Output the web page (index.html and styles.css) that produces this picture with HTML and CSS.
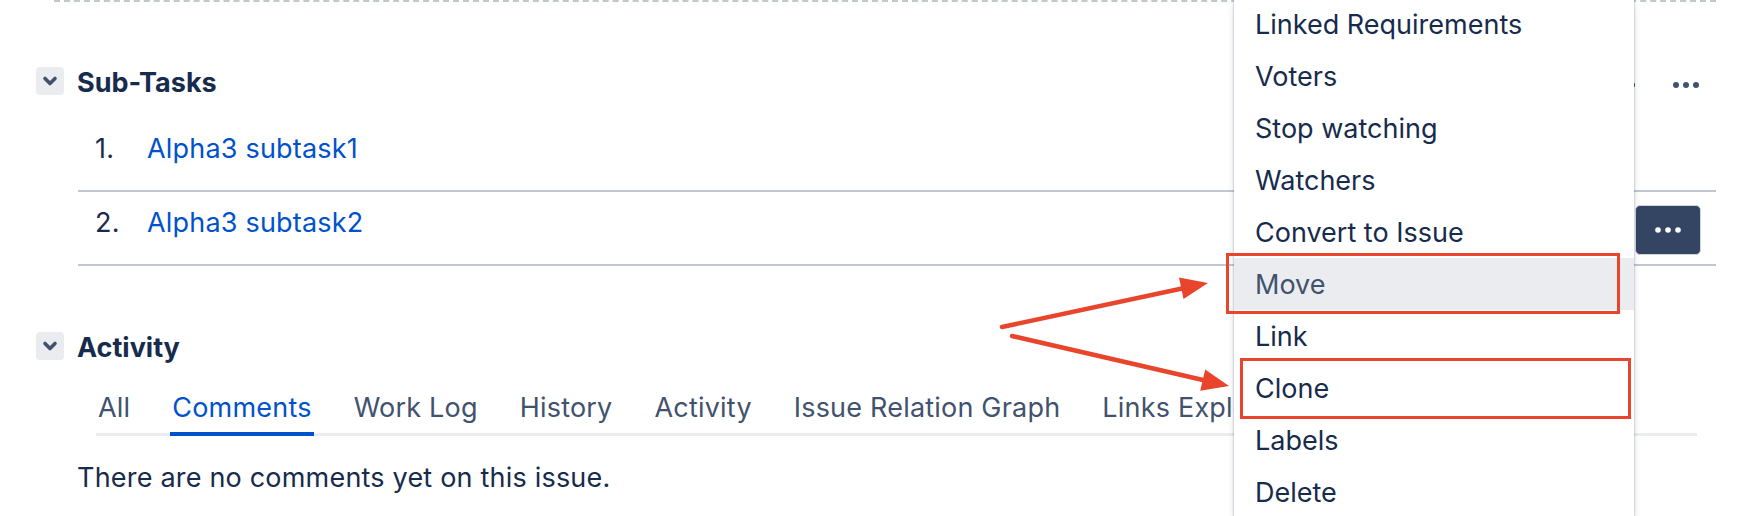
FILE: index.html
```html
<!DOCTYPE html>
<html lang="en">
<head>
  <meta charset="UTF-8">
  <title>Sub-Tasks - More actions</title>
  <link rel="stylesheet" href="styles.css">
</head>
<body>
  <div class="issue">
    <div class="dash"></div>

    <section class="module">
      <header class="modHeader">
        <span class="toggle">
          <svg width="28" height="28" viewBox="0 0 28 28"><path d="M9 11.5 L14 16.5 L19 11.5" fill="none" stroke="#42526e" stroke-width="3.6" stroke-linecap="round" stroke-linejoin="round"/></svg>
        </span>
        <h2>Sub-Tasks</h2>
        <div class="modActions">
          <svg class="plus" width="18" height="18" viewBox="0 0 18 18"><path d="M9 2 V16 M2 9 H16" stroke="#42526e" stroke-width="3.5"/></svg>
          <svg width="26" height="8" viewBox="0 0 26 8"><circle cx="3" cy="4" r="3" fill="#42526e"/><circle cx="13" cy="4" r="3" fill="#42526e"/><circle cx="23" cy="4" r="3" fill="#42526e"/></svg>
        </div>
      </header>

      <ol class="subtasks">
        <li class="row">
          <span class="num">1.</span>
          <a href="#">Alpha3 subtask1</a>
        </li>
        <li class="row">
          <span class="num">2.</span>
          <a href="#">Alpha3 subtask2</a>
          <span class="moreBtn">
            <svg width="26" height="8" viewBox="0 0 26 8"><circle cx="3" cy="4" r="2.8" fill="#fff"/><circle cx="13" cy="4" r="2.8" fill="#fff"/><circle cx="23" cy="4" r="2.8" fill="#fff"/></svg>
          </span>
        </li>
      </ol>
    </section>

    <section class="module activity">
      <header class="modHeader">
        <span class="toggle">
          <svg width="28" height="28" viewBox="0 0 28 28"><path d="M9 11.5 L14 16.5 L19 11.5" fill="none" stroke="#42526e" stroke-width="3.6" stroke-linecap="round" stroke-linejoin="round"/></svg>
        </span>
        <h2>Activity</h2>
      </header>

      <div class="tabBar">
        <ul class="tabs">
          <li>All</li>
          <li class="active">Comments</li>
          <li>Work Log</li>
          <li>History</li>
          <li>Activity</li>
          <li>Issue Relation Graph</li>
          <li>Links Explorer</li>
        </ul>
      </div>

      <p class="empty">There are no comments yet on this issue.</p>
    </section>
  </div>

  <!-- opened "more" menu of subtask 2 -->
  <ul class="dropdown">
    <li>Linked Requirements</li>
    <li>Voters</li>
    <li>Stop watching</li>
    <li>Watchers</li>
    <li>Convert to Issue</li>
    <li class="hover">Move</li>
    <li>Link</li>
    <li>Clone</li>
    <li>Labels</li>
    <li>Delete</li>
  </ul>

  <!-- annotations -->
  <div class="callout moveBox"></div>
  <div class="callout cloneBox"></div>
  <svg class="arrows" width="1756" height="516" viewBox="0 0 1756 516">
    <path d="M1002 327 L1182 288.5" stroke="#e8452c" stroke-width="4.5" stroke-linecap="round"/>
    <polygon points="1208,283 1183.5,299 1179,277.5" fill="#e8452c"/>
    <path d="M1012 336 L1203 380" stroke="#e8452c" stroke-width="4.5" stroke-linecap="round"/>
    <polygon points="1229,386 1200.2,390.8 1205.2,369.4" fill="#e8452c"/>
  </svg>
</body>
</html>
```

FILE: styles.css
```css
body {
  margin: 0;
  background: #fff;
  font-family: Inter, "Noto Sans", sans-serif;
  font-size: 27px;
  letter-spacing: 0.2px;
  color: #172b4d;
  overflow: hidden;
}
.issue {
  width: 1680px;
  margin-left: 36px;
}
.dash {
  margin-left: 18px;
  height: 0;
  border-top: dashed #c1c7d0 2px;
}
.modHeader {
  display: flex;
  align-items: center;
  height: 28px;
  margin-top: 65px;
}
.toggle {
  display: flex;
  width: 28px;
  height: 28px;
  border-radius: 4px;
  background: #ebecf0;
}
.modHeader h2 {
  margin: 0 0 0 13px;
  font-size: 27px;
  line-height: 28px;
  font-weight: 700;
  letter-spacing: 0;
  padding-top: 4px;
}
.modActions {
  margin-left: auto;
  margin-right: 17px;
  display: flex;
  align-items: center;
  gap: 36px;
  padding-top: 8px;
}
.subtasks {
  list-style: none;
  margin: 23px 0 0 42px;
  padding: 0;
}
.row {
  display: flex;
  align-items: center;
  height: 74px;
  padding: 0 15px 10px 17px;
  box-sizing: border-box;
  border-bottom: solid #c1c7d0 2px;
  line-height: 32px;
}
.num {
  width: 52px;
}
.row a {
  color: #0052cc;
  text-decoration: none;
}
.moreBtn {
  margin-left: auto;
  margin-top: 14px;
  display: flex;
  align-items: center;
  justify-content: center;
  width: 66px;
  height: 50px;
  box-sizing: border-box;
  border-radius: 5px;
  background: #344563;
  border: solid #d3d6dc 1.5px;
}
.activity .modHeader {
  margin-top: 66px;
}
.tabBar {
  margin: 32px 19px 0 60px;
  box-shadow: inset 0 -3px 0 #ebecf0;
}
.tabs {
  list-style: none;
  display: flex;
  gap: 38px;
  max-width: 1138px;
  margin: 0;
  padding: 0;
  overflow: hidden;
  white-space: nowrap;
}
.tabs li {
  color: #42526e;
  line-height: 32px;
  padding: 0 2px 12px;
}
.tabs li.active {
  color: #0052cc;
  box-shadow: inset 0 -4px 0 #0052cc;
}
.empty {
  margin: 26px 0 0 41px;
  line-height: 32px;
}
.dropdown {
  position: absolute;
  left: 1234px;
  top: -2px;
  width: 400px;
  margin: 0;
  padding: 0;
  list-style: none;
  background: #fff;
  letter-spacing: 0;
  box-shadow: 0 4px 8px -2px rgba(9, 30, 66, 0.25), 0 0 2px rgba(9, 30, 66, 0.31);
}
.dropdown li {
  height: 52px;
  box-sizing: border-box;
  padding: 11px 0 0 21px;
  line-height: 32px;
}
.dropdown li.hover {
  background: #ebecf0;
  color: #42526e;
}
.callout {
  position: absolute;
  border: solid #e8452c 3px;
  box-sizing: border-box;
}
.moveBox {
  left: 1226px;
  top: 253px;
  width: 394px;
  height: 61px;
}
.cloneBox {
  left: 1240px;
  top: 358px;
  width: 391px;
  height: 61px;
}
.arrows {
  position: absolute;
  left: 0;
  top: 0;
}
```
